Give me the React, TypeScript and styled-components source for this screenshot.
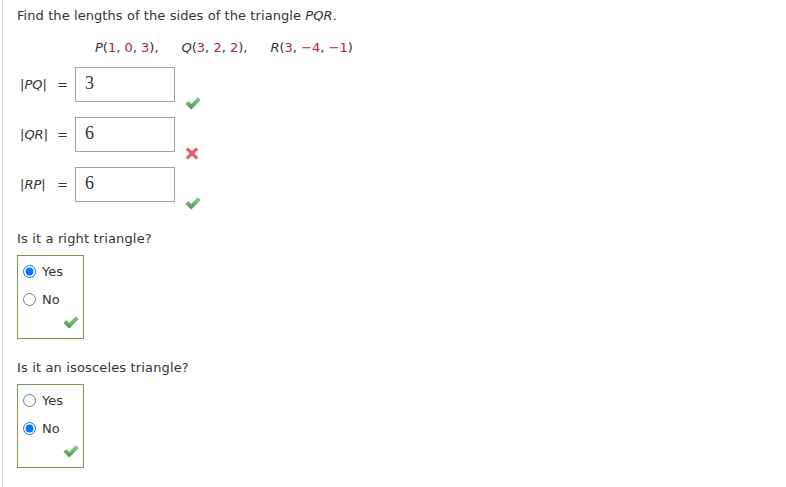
import React from 'react';
import styled, { createGlobalStyle } from 'styled-components';

const GlobalStyle = createGlobalStyle`
  html, body {
    margin: 0;
    padding: 0;
    background: #ffffff;
  }
  body {
    font-family: "DejaVu Sans", Verdana, sans-serif;
    font-size: 13px;
    color: #333333;
  }
`;

const Page = styled.div`
  margin-left: 2px;
  border-left: 1px solid #d4d4d4;
  min-height: 487px;
  padding: 8px 0 0 14px;
  box-sizing: border-box;
`;

const Title = styled.div`
  line-height: 16px;
  height: 16px;
  letter-spacing: 0.08px;
`;

const Points = styled.div`
  margin-top: 16px;
  padding-left: 78px;
  line-height: 16px;
  height: 16px;
  display: flex;
  gap: 23px;
`;

const Num = styled.span`
  color: #b3262c;
`;

const Var = styled.i`
  font-style: italic;
`;

const Rows = styled.div`
  margin-top: 11px;
  display: flex;
  flex-direction: column;
  gap: 15px;
`;

const Row = styled.div`
  display: flex;
  align-items: center;
  height: 35px;
`;

const Name = styled.span`
  width: 37px;
  padding-left: 3px;
`;

const Eq = styled.span`
  width: 18px;
`;

const AnswerBox = styled.div`
  width: 100px;
  height: 35px;
  box-sizing: border-box;
  border: 1px solid #a3a3a3;
  padding-left: 9px;
  font-family: "Liberation Serif", "Times New Roman", serif;
  font-size: 18px;
  line-height: 30px;
  color: #333333;
`;

const Feedback = styled.span`
  align-self: flex-end;
  margin-left: 10px;
  margin-bottom: -8px;
  display: flex;
`;

const Question = styled.div<{ $gap: number }>`
  margin-top: ${(p) => p.$gap}px;
  line-height: 16px;
  height: 16px;
  letter-spacing: 0.15px;
`;

const ChoiceBox = styled.div`
  margin-top: 8px;
  width: 67px;
  height: 84px;
  box-sizing: border-box;
  border: 1px solid #76995a;
  padding: 5px 4px 0 0;
  display: flex;
  flex-direction: column;
`;

const Choice = styled.label`
  display: flex;
  align-items: center;
  height: 20px;
  margin-bottom: 8px;
`;

const Radio = styled.input`
  width: 13px;
  height: 13px;
  margin: 0 6px 0 5px;
`;

const BoxCheck = styled.span`
  align-self: flex-end;
  margin-top: -1px;
  display: flex;
`;

const Check = () => (
  <svg width="16" height="13" viewBox="0 0 16 13">
    <defs>
      <linearGradient id="ck" x1="0" y1="0" x2="0" y2="1">
        <stop offset="0" stopColor="#8fd48a" />
        <stop offset="1" stopColor="#3f9a3f" />
      </linearGradient>
    </defs>
    <path
      d="M0.8 6.8 L3.4 4.6 L6.2 7.4 L12.8 0.8 L15.2 3.0 L6.2 12.2 Z"
      fill="url(#ck)"
      stroke="#4d8a4a"
      strokeWidth="0.6"
      strokeLinejoin="round"
    />
  </svg>
);

const Cross = () => (
  <svg width="14" height="13" viewBox="0 0 14 13">
    <path
      d="M1 2.6 L2.8 0.8 L7 4.6 L11.2 0.8 L13 2.6 L9 6.5 L13 10.4 L11.2 12.2 L7 8.4 L2.8 12.2 L1 10.4 L5 6.5 Z"
      fill="#ea5a63"
      stroke="#d8434d"
      strokeWidth="0.5"
      strokeLinejoin="round"
    />
  </svg>
);

type Side = { a: string; b: string; value: string; ok: boolean };

const sides: Side[] = [
  { a: 'P', b: 'Q', value: '3', ok: true },
  { a: 'Q', b: 'R', value: '6', ok: false },
  { a: 'R', b: 'P', value: '6', ok: true },
];

const Point = ({ name, coords, last }: { name: string; coords: string[]; last?: boolean }) => (
  <span>
    <Var>{name}</Var>(
    {coords.map((c, i) => (
      <React.Fragment key={i}>
        <Num>{c}</Num>
        {i < coords.length - 1 ? ', ' : ''}
      </React.Fragment>
    ))}
    ){last ? '' : ','}
  </span>
);

const ChoiceGroup = ({ name, selected }: { name: string; selected: 'Yes' | 'No' }) => (
  <ChoiceBox>
    {(['Yes', 'No'] as const).map((opt) => (
      <Choice key={opt}>
        <Radio type="radio" name={name} defaultChecked={selected === opt} />
        {opt}
      </Choice>
    ))}
    <BoxCheck>
      <Check />
    </BoxCheck>
  </ChoiceBox>
);

export default function App() {
  return (
    <>
      <GlobalStyle />
      <Page>
        <Title>
          Find the lengths of the sides of the triangle <Var>PQR</Var>.
        </Title>
        <Points>
          <Point name="P" coords={['1', '0', '3']} />
          <Point name="Q" coords={['3', '2', '2']} />
          <Point name="R" coords={['3', '\u22124', '\u22121']} last />
        </Points>
        <Rows>
          {sides.map((s) => (
            <Row key={s.a + s.b}>
              <Name>
                |<Var>{s.a + s.b}</Var>|
              </Name>
              <Eq>=</Eq>
              <AnswerBox>{s.value}</AnswerBox>
              <Feedback>{s.ok ? <Check /> : <Cross />}</Feedback>
            </Row>
          ))}
        </Rows>
        <Question $gap={29}>Is it a right triangle?</Question>
        <ChoiceGroup name="right" selected="Yes" />
        <Question $gap={21}>Is it an isosceles triangle?</Question>
        <ChoiceGroup name="isosceles" selected="No" />
      </Page>
    </>
  );
}
